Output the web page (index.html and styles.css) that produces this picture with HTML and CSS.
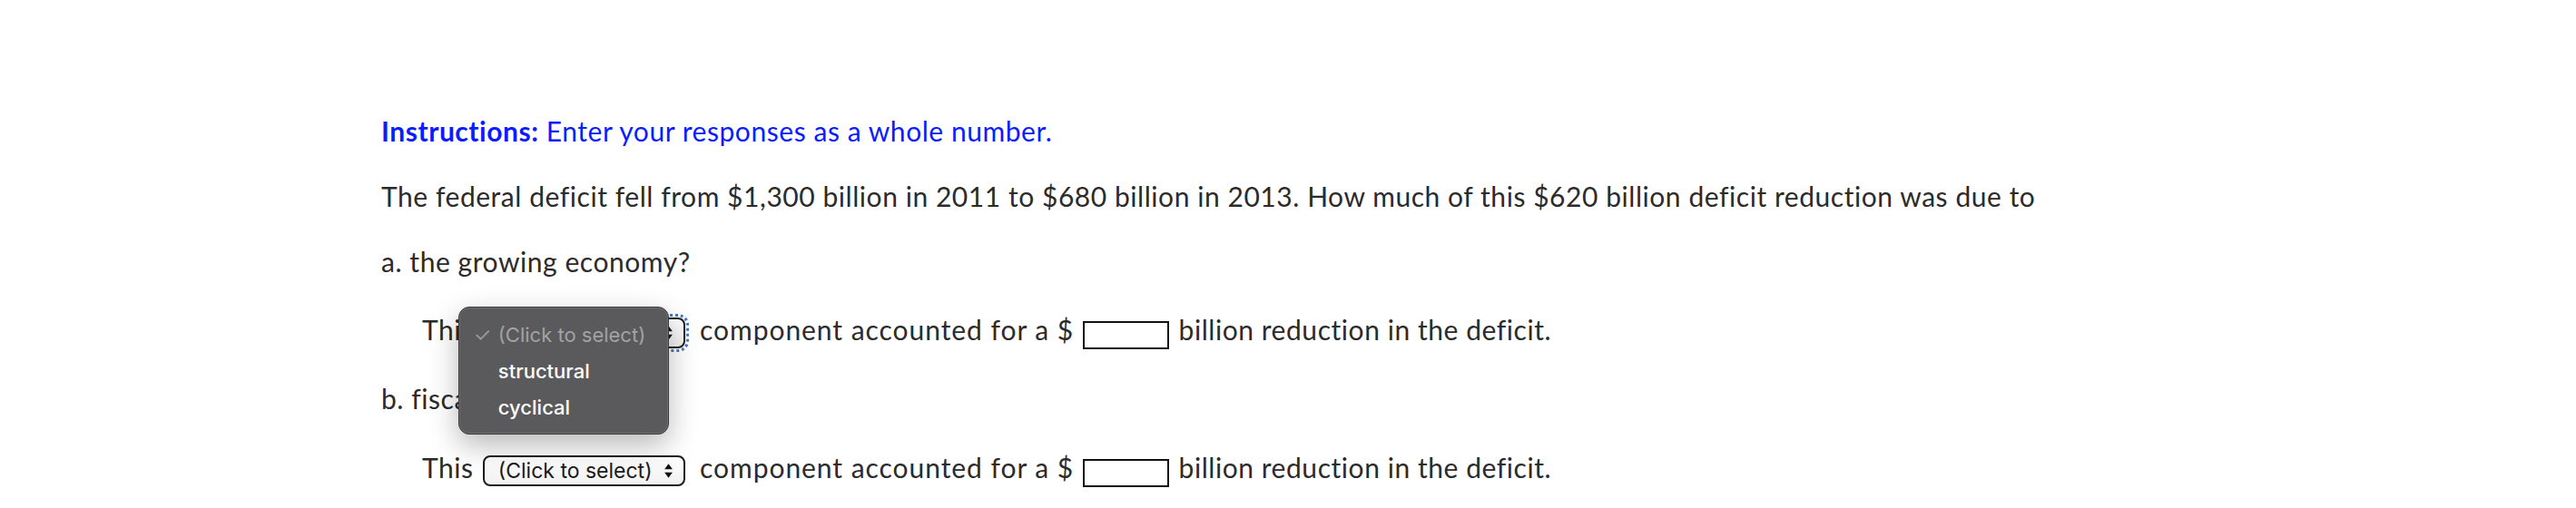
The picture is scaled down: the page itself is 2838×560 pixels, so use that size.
FILE: index.html
```html
<!DOCTYPE html>
<html lang="en">
<head>
<meta charset="utf-8">
<title>Deficit question</title>
<link rel="stylesheet" href="styles.css">
</head>
<body>
<div class="question">
  <p class="line instr"><b>Instructions:</b> Enter your responses as a whole number.</p>
  <p class="line">The federal deficit fell from $1,300 billion in 2011 to $680 billion in 2013. How much of this $620 billion deficit reduction was due to</p>
  <p class="line">a. the growing economy?</p>
  <p class="line row row-a">This <span class="select focused">(Click to select)<svg class="arrows" width="10" height="16" viewBox="0 0 10 16"><path d="M5 1 L9 6.5 L1 6.5 Z" fill="#111"/><path d="M5 15 L9 9.5 L1 9.5 Z" fill="#111"/></svg><span class="menu"><span class="item current"><span class="check">✓</span>(Click to select)</span><span class="item">structural</span><span class="item">cyclical</span></span></span> <span class="lead">component accounted for a $</span> <span class="box"></span> billion reduction in the deficit.</p>
  <p class="line part-b">b. fiscal policy?</p>
  <p class="line row row-b">This <span class="select">(Click to select)<svg class="arrows" width="10" height="16" viewBox="0 0 10 16"><path d="M5 1 L9 6.5 L1 6.5 Z" fill="#111"/><path d="M5 15 L9 9.5 L1 9.5 Z" fill="#111"/></svg></span> <span class="lead">component accounted for a $</span> <span class="box"></span> billion reduction in the deficit.</p>
</div>
</body>
</html>
```
FILE: styles.css
```css
html, body {
  margin: 0;
  padding: 0;
  background: #ffffff;
}

.question {
  padding: 108px 0 0 420px;
  font-family: "Lato", "Liberation Sans", sans-serif;
  font-size: 30px;
  letter-spacing: 0.55px;
  color: #2b2b2b;
}

.line {
  margin: 0;
  line-height: 72px;
  white-space: nowrap;
}

.instr {
  color: #0b1cff;
}

.instr b {
  font-weight: 700;
}

.row {
  padding-left: 45px;
}

.row-a {
  line-height: 78px;
}

.part-b {
  line-height: 74px;
}

.row-b {
  line-height: 78px;
}

.lead {
  letter-spacing: 0.95px;
}

.select {
  display: inline-block;
  position: relative;
  box-sizing: border-box;
  width: 223px;
  height: 34px;
  margin: 0 8px 0 2px;
  padding-left: 15px;
  border: 2px solid #1c1c1c;
  border-radius: 8px;
  background: linear-gradient(#ffffff, #f1f1f1);
  font-family: "Inter", "Liberation Sans", sans-serif;
  font-size: 23px;
  letter-spacing: 0;
  line-height: 30px;
  color: #1a1a1a;
  vertical-align: baseline;
}

.select.focused {
  outline: 3px dotted #4a78c2;
  outline-offset: 1px;
}

.arrows {
  position: absolute;
  right: 11px;
  top: 6px;
  width: 11px;
  height: 18px;
}

.menu {
  position: absolute;
  left: -29px;
  top: -14px;
  width: 232px;
  height: 141px;
  box-sizing: border-box;
  padding-top: 10px;
  background: #5a5a5c;
  border: 1px solid #3a3a3c;
  border-radius: 12px;
  box-shadow: inset 0 0 0 1px rgba(255, 255, 255, 0.12), 0 12px 32px rgba(0, 0, 0, 0.28);
  display: flex;
  flex-direction: column;
  z-index: 2;
  font-family: "Inter", "Liberation Sans", sans-serif;
  font-size: 22px;
  font-weight: 500;
}

.item {
  display: block;
  position: relative;
  height: 40px;
  line-height: 40px;
  padding-left: 43px;
  color: #ffffff;
}

.item.current {
  color: #a2a2a4;
  font-weight: 400;
}

.check {
  position: absolute;
  left: 16px;
  top: 0;
  color: #99999b;
}

.box {
  display: inline-block;
  box-sizing: border-box;
  width: 95px;
  height: 31px;
  margin: 0 2px 0 2px;
  border: 2px solid #111111;
  background: #ffffff;
  vertical-align: -10px;
}
```
